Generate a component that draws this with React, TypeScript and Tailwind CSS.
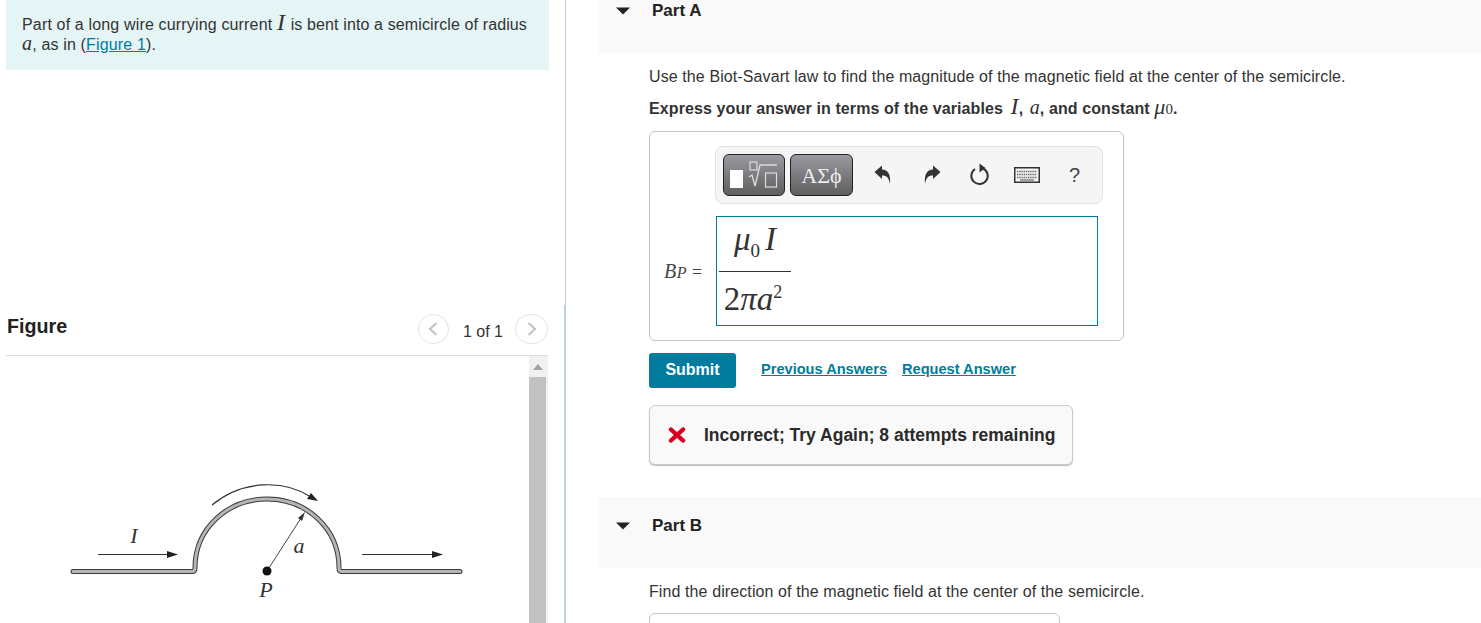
import React from "react";

const Tri = () => (
  <svg width="16" height="8" viewBox="0 0 16 8" className="block">
    <path d="M1 0.5H15L8 7.5Z" fill="#222" />
  </svg>
);

const Chevron = ({ dir }: { dir: "l" | "r" }) => (
  <svg width="12" height="16" viewBox="0 0 12 16">
    <path d={dir === "l" ? "M9.5 2L3 8l6.5 6" : "M2.5 2L9 8l-6.5 6"} fill="none" stroke="#c4c4c4" strokeWidth="2.2" />
  </svg>
);

const Figure = () => (
  <svg width="523" height="267" viewBox="6 356 523 267" className="block shrink-0">
    <path d="M73 571.5H192Q195 571.5 195 568C195 528 228 499 267 499C306 499 339 528 339 568Q339 571.5 342 571.5H460" fill="none" stroke="#3a3a3a" strokeWidth="5" strokeLinecap="round" />
    <path d="M73 571.5H192Q195 571.5 195 568C195 528 228 499 267 499C306 499 339 528 339 568Q339 571.5 342 571.5H460" fill="none" stroke="#b5b5b5" strokeWidth="3" strokeLinecap="round" />
    <path d="M212 505C243 479 285 480 311 497" fill="none" stroke="#333" strokeWidth="1.2" />
    <path d="M318 501L307 499L311 493Z" fill="#222" />
    <path d="M98 554.5H170M362 554.5H435" stroke="#333" strokeWidth="1.2" />
    <path d="M178 554.5L167 551V558Z M443 554.5L432 551V558Z" fill="#222" />
    <path d="M267 571L303 515" stroke="#444" strokeWidth="1" />
    <path d="M305 512L298 518L302 521Z" fill="#333" />
    <circle cx="267" cy="571" r="4.5" fill="#111" />
    <text x="134" y="543" fontFamily="Liberation Serif" fontStyle="italic" fontSize="22" fill="#333" textAnchor="middle">I</text>
    <text x="299" y="553" fontFamily="Liberation Serif" fontStyle="italic" fontSize="22" fill="#333" textAnchor="middle">a</text>
    <text x="266" y="597" fontFamily="Liberation Serif" fontStyle="italic" fontSize="22" fill="#333" textAnchor="middle">P</text>
  </svg>
);

const Toolbar = () => (
  <div className="ml-[65px] flex h-[58px] w-[388px] items-center rounded-[8px] border border-[#e2e2e2] bg-[#f5f5f5] pl-[7px]">
    <div className="flex h-[42px] w-[62px] items-center justify-center rounded-[6px] border border-[#222] bg-gradient-to-b from-[#9a9aa2] to-[#5f5f5f]">
      <svg width="52" height="30" viewBox="0 0 52 30">
        <rect x="2" y="10" width="13" height="18" fill="#fff" />
        <rect x="22" y="2" width="7" height="8" fill="none" stroke="#ddd" strokeWidth="1.2" />
        <path d="M21 17L24 15L27 26L32 5H49" fill="none" stroke="#ddd" strokeWidth="1.3" />
        <rect x="37.5" y="13" width="11" height="14" fill="none" stroke="#ddd" strokeWidth="1.2" />
      </svg>
    </div>
    <div className="ml-[5px] flex h-[42px] w-[63px] items-center justify-center rounded-[6px] border border-[#222] bg-gradient-to-b from-[#9a9aa2] to-[#5f5f5f] font-['Liberation_Serif',serif] text-[22px] text-[#eee]">
      AΣϕ
    </div>
    <svg width="18" height="20" viewBox="0 0 18 20" className="ml-[21px]">
      <path d="M0.5 7L8 0.5V4.5C13 4.5 17 8 16 19C15 13 13 10.5 8 10.5V14Z" fill="#333" />
    </svg>
    <svg width="18" height="20" viewBox="0 0 18 20" className="ml-[31px]">
      <path d="M17.5 7L10 0.5V4.5C5 4.5 1 8 2 19C3 13 5 10.5 10 10.5V14Z" fill="#333" />
    </svg>
    <svg width="22" height="24" viewBox="0 0 22 24" className="ml-[28px]">
      <path d="M13.5 5.2A8.2 8.2 0 1 1 6 6" fill="none" stroke="#333" strokeWidth="2" />
      <path d="M10.5 0.5L16.5 5L10.5 9.5Z" fill="#333" />
    </svg>
    <svg width="26" height="16" viewBox="0 0 26 16" className="ml-[23px]">
      <rect x="0.75" y="0.75" width="24.5" height="14.5" fill="#f5f5f5" stroke="#333" strokeWidth="1.5" />
      <path d="M3 4.5H23M3 7.5H23M3 10.5H23" stroke="#666" strokeWidth="1.6" strokeDasharray="1.4 0.8" />
      <path d="M6 13H20" stroke="#666" strokeWidth="1.2" />
    </svg>
    <span className="ml-[29px] font-['Liberation_Sans',sans-serif] text-[20px] text-[#444]">?</span>
  </div>
);

export default function App() {
  return (
    <div className="flex h-[623px] w-[1481px] overflow-hidden bg-white font-['Liberation_Sans',sans-serif] text-[16px] text-[#333]">
      <div className="relative flex h-full w-[566px] shrink-0 flex-col border-r border-[#c9c9c9]">
        <div className="absolute right-[-1px] top-[305px] h-[318px] w-[2px] bg-[#bcd0e2]" />
        <div className="ml-[6px] h-[70px] w-[543px] shrink-0 bg-[#e5f5f6] pl-[16px] pt-[15px] leading-[20px] tracking-[0.16px]">
          Part of a long wire currying current{" "}
          <span className="font-['Liberation_Serif',serif] text-[24px] leading-[0] italic">I</span>{" "}
          <span className="ml-[1px] tracking-[0.12px]">is bent into a semicircle of radius</span>
          <br />
          <span className="font-['Liberation_Serif',serif] text-[20px] leading-[0] italic">a</span>, as in (
          <span className="text-[#007c9f] underline">Figure 1</span>).
        </div>
        <div className="ml-[6px] mt-[244px] flex h-[42px] w-[542px] shrink-0 items-start border-b border-[#dcdcdc]">
          <span className="ml-[1px] mt-[1px] flex-1 text-[19.7px] font-bold leading-[22px] text-[#222]">Figure</span>
          <span className="flex h-[30px] w-[31px] items-center justify-center rounded-full border border-[#e4e4e4]">
            <Chevron dir="l" />
          </span>
          <span className="ml-[14px] mr-[12px] mt-[6px] leading-[24px]">1 of 1</span>
          <span className="flex h-[30px] w-[33px] items-center justify-center rounded-full border border-[#e4e4e4]">
            <Chevron dir="r" />
          </span>
        </div>
        <div className="ml-[6px] flex min-h-0 flex-1">
          <Figure />
          <div className="flex w-[19px] flex-col bg-[#f1f1f1] pr-[2px] pl-0">
            <div className="flex h-[21px] shrink-0 items-center justify-center">
              <svg width="10" height="6" viewBox="0 0 10 6">
                <path d="M0 6L5 0L10 6Z" fill="#a3a3a3" />
              </svg>
            </div>
            <div className="flex-1 bg-[#c1c1c1]" />
          </div>
        </div>
      </div>

      <div className="ml-[33px] flex min-w-0 flex-1 flex-col">
        <div className="flex h-[53px] shrink-0 items-start bg-[#f9f9f9] pl-[16px]">
          <span className="mt-[7px]"><Tri /></span>
          <span className="ml-[21px] mt-[1px] text-[17px] font-bold leading-[20px] text-[#222]">Part A</span>
        </div>
        <div className="pl-[50px]">
          <p className="mt-[15px] leading-[18px] tracking-[0.1px]">Use the Biot-Savart law to find the magnitude of the magnetic field at the center of the semicircle.</p>
          <p className="mt-[13px] h-[20px] font-bold leading-[20px] tracking-[0.1px]">
            Express your answer in terms of the variables{" "}
            <span className="ml-[3px] font-['Liberation_Serif',serif] text-[24px] font-normal leading-[0] italic">I</span>,{" "}
            <span className="ml-[2px] font-['Liberation_Serif',serif] text-[20px] font-normal leading-[0] italic">a</span>, and constant{" "}
            <span className="font-['Liberation_Serif',serif] text-[22px] font-normal leading-[0] italic">μ</span>
            <span className="font-['Liberation_Serif',serif] text-[15px] font-normal leading-[0]">0</span>.
          </p>
          <div className="mt-[12px] h-[210px] w-[475px] rounded-[6px] border border-[#c4c4c4] pt-[14px]">
            <Toolbar />
            <div className="mt-[12px] flex items-center">
              <span className="ml-[14px] w-[52px] whitespace-nowrap font-['Liberation_Serif',serif] text-[18px] tracking-[0.5px] text-[#444]">
                <i className="text-[20px]">B</i><i className="text-[16px]">P</i> =
              </span>
              <div className="flex h-[110px] w-[382px] items-center border border-[#007c9f] pl-[2px] font-['Liberation_Serif',serif] text-[#333]">
                <div className="flex w-[72px] flex-col items-center">
                  <div className="flex h-[54px] items-center pb-[8px] text-[33px] italic leading-none">
                    μ<span className="mt-[22px] text-[19px] not-italic">0</span><span className="ml-[5px]">I</span>
                  </div>
                  <div className="h-px w-full bg-[#333]" />
                  <div className="flex h-[54px] items-center pr-[4px] pt-[1px] text-[33px] leading-none">
                    2<i>πa</i><span className="mb-[14px] text-[18px]">2</span>
                  </div>
                </div>
              </div>
            </div>
          </div>
          <div className="mt-[12px] flex items-center">
            <span className="flex h-[35px] w-[87px] items-center justify-center rounded-[3px] bg-[#007c9f] pb-[2px] font-bold text-white">Submit</span>
            <span className="ml-[25px] pb-[2px] text-[14.6px] font-bold text-[#007c9f] underline">Previous Answers</span>
            <span className="ml-[15px] pb-[2px] text-[14.6px] font-bold text-[#007c9f] underline">Request Answer</span>
          </div>
          <div className="mt-[17px] flex h-[60px] w-[424px] items-center rounded-[6px] border border-[#c9c9c9] bg-[#f9f9f9] pl-[18px] shadow-[0_1px_1px_#bbb]">
            <svg width="18" height="16" viewBox="0 0 18 16">
              <path d="M3 2.5L15 13.5M15 2.5L3 13.5" stroke="#d8001f" strokeWidth="4.4" strokeLinecap="round" />
            </svg>
            <span className="ml-[18px] text-[17.5px] font-bold text-[#2a2a2a]">Incorrect; Try Again; 8 attempts remaining</span>
          </div>
        </div>
        <div className="mt-[32px] flex h-[71px] shrink-0 items-start bg-[#f9f9f9] pl-[16px]">
          <span className="mt-[25px]"><Tri /></span>
          <span className="ml-[21px] mt-[19px] text-[17px] font-bold leading-[20px] text-[#222]">Part B</span>
        </div>
        <div className="pl-[50px]">
          <p className="mt-[15px] leading-[18px] tracking-[0.1px]">Find the direction of the magnetic field at the center of the semicircle.</p>
          <div className="mt-[12px] h-[40px] w-[411px] rounded-[6px] border border-[#c4c4c4]" />
        </div>
      </div>
    </div>
  );
}
